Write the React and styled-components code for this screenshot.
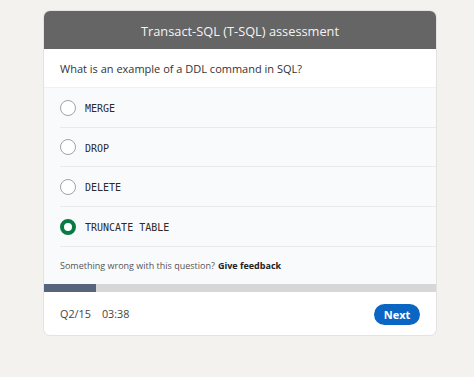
import React from "react";
import styled, { createGlobalStyle } from "styled-components";

const Global = createGlobalStyle`
  html, body { margin: 0; padding: 0; background: #f3f2ef; }
  body { font-family: "Open Sans", "Noto Sans", sans-serif; }
`;

const Page = styled.div`
  width: 474px;
  height: 377px;
  box-sizing: border-box;
  padding: 11px 38px 0 44px;
  background: #f3f2ef;
`;

const Card = styled.div`
  background: #fff;
  border-radius: 6px;
  overflow: hidden;
  box-shadow: 0 0 0 1px rgba(0, 0, 0, 0.06);
`;

const Header = styled.div`
  height: 38px;
  background: #656565;
  color: #f4f4f4;
  display: flex;
  align-items: center;
  justify-content: center;
  font-size: 12.8px;
  padding-top: 1px;
  box-sizing: border-box;
`;

const Question = styled.div`
  height: 38px;
  display: flex;
  align-items: center;
  padding-left: 16px;
  font-size: 11px;
  color: #333;
`;

const Options = styled.div`
  background: #f9fafb;
  border-top: 1px solid #eef0f2;
`;

const Option = styled.label`
  height: ${(p) => p.$h}px;
  margin-left: 16px;
  display: flex;
  align-items: center;
  gap: 9px;
  border-bottom: 1px solid #e8eaed;
  box-sizing: border-box;
`;

const Radio = styled.span`
  width: 16px;
  height: 16px;
  box-sizing: border-box;
  border-radius: 50%;
  border: ${(p) => (p.$checked ? "4px solid #0a7a45" : "1.5px solid #a3a3a3")};
  background: #fff;
  flex: none;
`;

const Code = styled.span`
  font-family: "DejaVu Sans Mono", "Liberation Mono", monospace;
  font-size: 10px;
  color: #2b2b2b;
  padding-top: 2px;
`;

const Feedback = styled.div`
  height: 37px;
  background: #f9fafb;
  display: flex;
  align-items: center;
  padding-left: 16px;
  font-size: 9px;
  color: #555;
  b { color: #222; font-weight: 700; margin-left: 3px; }
`;

const Track = styled.div`
  height: 8px;
  background: #d7d7d7;
`;

const Fill = styled.div`
  height: 100%;
  background: #56657d;
`;

const Footer = styled.div`
  height: 43px;
  display: flex;
  align-items: center;
  padding: 0 16px;
  font-size: 10.8px;
  color: #444;
  gap: 11px;
`;

const Spacer = styled.div`
  flex: 1;
`;

const Next = styled.button`
  border: none;
  background: #0a66c2;
  color: #fff;
  font-family: inherit;
  font-weight: 700;
  font-size: 11px;
  height: 21px;
  width: 46px;
  border-radius: 11px;
  padding: 0;
  margin-top: 2px;
`;

const options = [
  { t: "MERGE", h: 40 },
  { t: "DROP", h: 39 },
  { t: "DELETE", h: 40 },
  { t: "TRUNCATE TABLE", h: 40, c: true },
];

export default function App() {
  return (
    <Page>
      <Global />
      <Card>
        <Header>Transact-SQL (T-SQL) assessment</Header>
        <Question>What is an example of a DDL command in SQL?</Question>
        <Options>
          {options.map((o) => (
            <Option key={o.t} $h={o.h}>
              <Radio $checked={o.c} />
              <Code>{o.t}</Code>
            </Option>
          ))}
        </Options>
        <Feedback>
          Something wrong with this question?<b>Give feedback</b>
        </Feedback>
        <Track>
          <Fill style={{ width: `${(2 / 15) * 100}%` }} />
        </Track>
        <Footer>
          <span>Q2/15</span>
          <span>03:38</span>
          <Spacer />
          <Next>Next</Next>
        </Footer>
      </Card>
    </Page>
  );
}
